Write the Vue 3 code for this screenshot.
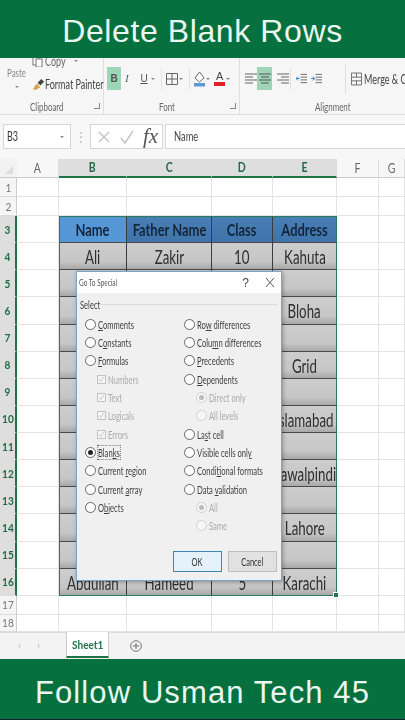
<script setup>
const cols = ['A', 'B', 'C', 'D', 'E', 'F', 'G']
const selCols = ['B', 'C', 'D', 'E']
const rowsData = [
  { n: 1 }, { n: 2 },
  { n: 3, head: true, cells: ['Name', 'Father Name', 'Class', 'Address'] },
  { n: 4, cells: ['Ali', 'Zakir', '10', 'Kahuta'] },
  { n: 5, cells: ['', '', '', ''] },
  { n: 6, cells: ['', '', '', 'Bloha'] },
  { n: 7, cells: ['', '', '', ''] },
  { n: 8, cells: ['', '', '', 'Grid'] },
  { n: 9, cells: ['', '', '', ''] },
  { n: 10, cells: ['', '', '', 'Islamabad'] },
  { n: 11, cells: ['', '', '', ''] },
  { n: 12, cells: ['', '', '', 'Rawalpindi'] },
  { n: 13, cells: ['', '', '', ''] },
  { n: 14, cells: ['', '', '', 'Lahore'] },
  { n: 15, cells: ['', '', '', ''] },
  { n: 16, cells: ['Abdullah', 'Hameed', '5', 'Karachi'] },
  { n: 17 }, { n: 18 }
]
const left = [
  { p: '', u: 'C', s: 'omments', t: 'r' },
  { p: 'C', u: 'o', s: 'nstants', t: 'r' },
  { p: '', u: 'F', s: 'ormulas', t: 'r' },
  { p: '', u: '', s: 'Numbers', t: 'c' },
  { p: '', u: '', s: 'Text', t: 'c' },
  { p: '', u: '', s: 'Logicals', t: 'c' },
  { p: '', u: '', s: 'Errors', t: 'c' },
  { p: 'Blan', u: 'k', s: 's', t: 'r', on: true, focus: true },
  { p: 'Current ', u: 'r', s: 'egion', t: 'r' },
  { p: 'Current ', u: 'a', s: 'rray', t: 'r' },
  { p: 'O', u: 'b', s: 'jects', t: 'r' }
]
const right = [
  { p: 'Ro', u: 'w', s: ' differences', t: 'r' },
  { p: 'Colu', u: 'm', s: 'n differences', t: 'r' },
  { p: '', u: 'P', s: 'recedents', t: 'r' },
  { p: '', u: 'D', s: 'ependents', t: 'r' },
  { p: '', u: '', s: 'Direct only', t: 's', on: true },
  { p: '', u: '', s: 'All levels', t: 's' },
  { p: 'La', u: 's', s: 't cell', t: 'r' },
  { p: 'Visible cells onl', u: 'y', s: '', t: 'r' },
  { p: 'Condi', u: 't', s: 'ional formats', t: 'r' },
  { p: 'Data ', u: 'v', s: 'alidation', t: 'r' },
  { p: '', u: '', s: 'All', t: 's', on: true },
  { p: '', u: '', s: 'Same', t: 's' }
]
</script>

<template>
  <div class="page">
    <header class="banner top">Delete Blank Rows</header>

    <section class="ribbon soft">
      <div class="group clip">
        <div class="grp-body clip-body">
          <div class="paste"><span class="sq">Paste</span><i class="caret"></i></div>
          <div class="clip-list">
            <div class="copy">
              <svg width="11" height="11" viewBox="0 0 11 11"><rect x="1" y="1" width="6" height="8" fill="#fff" stroke="#777"/><rect x="4" y="3" width="6" height="8" fill="#fff" stroke="#777"/></svg>
              <span class="sq">Copy</span><i class="caret c2"></i>
            </div>
            <div class="painter">
              <svg width="13" height="13" viewBox="0 0 14 14"><path d="M1 12 L5 6 L9 10 L4 13 Z" fill="#d8a24e"/><path d="M6 5 L10 1 L13 4 L9 8 Z" fill="#444"/></svg>
              <span class="sq">Format Painter</span>
            </div>
          </div>
        </div>
        <div class="grp-label"><span class="lbl-clip sq">Clipboard</span><i class="launch"></i></div>
      </div>

      <div class="group font">
        <div class="grp-body font-body">
          <span class="tb on b">B</span>
          <span class="tb i">I</span>
          <span class="tb u">U</span><i class="caret c3"></i>
          <i class="vsep"></i>
          <svg class="borders" width="12" height="12" viewBox="0 0 12 12"><path d="M.5.5h11v11H.5zM6 .5v11M.5 6h11" fill="none" stroke="#666"/></svg><i class="caret c3"></i>
          <i class="vsep"></i>
          <svg class="fill" width="11" height="16" viewBox="0 0 11 16"><path d="M5.500 1 L10 7 L5.500 11 L1 7 Z" fill="#fff" stroke="#666"/><rect y="12" width="11" height="3.500" fill="#5b9bd5"/></svg><i class="caret c3"></i>
          <span class="fcolor">A</span><i class="caret c3"></i>
        </div>
        <div class="grp-label"><span class="lbl-font sq">Font</span><i class="launch"></i></div>
      </div>

      <div class="group align">
        <div class="grp-body align-body">
          <svg class="al" width="12" height="11" viewBox="0 0 12 11"><path d="M0 1h12M0 4h8M0 7h12M0 10h8" stroke="#666" fill="none"/></svg>
          <span class="al-on"><svg width="12" height="11" viewBox="0 0 12 11"><path d="M0 1h12M2 4h8M0 7h12M2 10h8" stroke="#555" fill="none"/></svg></span>
          <svg class="al" width="12" height="11" viewBox="0 0 12 11"><path d="M0 1h12M4 4h8M0 7h12M4 10h8" stroke="#666" fill="none"/></svg>
          <i class="vsep v2"></i>
          <svg class="al" width="11" height="11" viewBox="0 0 12 11"><path d="M5 1h7M5 4h7M5 7h7M5 10h7" stroke="#666" fill="none"/><path d="M4 5.500H0M2 3.500L0 5.500l2 2" stroke="#2b7cd3" fill="none"/></svg>
          <svg class="al" width="11" height="11" viewBox="0 0 12 11"><path d="M5 1h7M5 4h7M5 7h7M5 10h7" stroke="#666" fill="none"/><path d="M0 5.500h4M2 3.500l2 2-2 2" stroke="#2b7cd3" fill="none"/></svg>
        </div>
        <div class="grp-label"><span class="sq lbl-align">Alignment</span></div>
      </div>

      <div class="group merge">
        <div class="grp-body merge-body">
          <svg width="11" height="14" viewBox="0 0 12 14"><path d="M.5.5h11v13H.5zM.5 5h11M.5 9h11M6 .5V5M6 9v4.500" fill="none" stroke="#666"/></svg>
          <span class="sq">Merge &amp; Center</span>
        </div>
      </div>
    </section>

    <section class="fbar soft">
      <div class="namebox"><span class="sq">B3</span><i class="caret c4"></i></div>
      <div class="dots">⋮</div>
      <div class="fbtns">
        <svg width="14" height="14" viewBox="0 0 14 14"><path d="M2 2l10 10M12 2L2 12" stroke="#c4c4c4" stroke-width="1.500"/></svg>
        <svg width="14" height="14" viewBox="0 0 14 14"><path d="M1 8l4 5 8-12" stroke="#c4c4c4" stroke-width="1.500" fill="none"/></svg>
        <span class="fx">fx</span>
      </div>
      <div class="finput"><span class="sq">Name</span></div>
    </section>

    <section class="sheet soft">
      <div class="corner"><i></i></div>
      <div v-for="c in cols" :key="c" class="colh" :class="{ sel: selCols.includes(c) }"><span class="sqc">{{ c }}</span></div>
      <template v-for="r in rowsData" :key="r.n">
        <div class="rowh" :class="{ sel: r.n >= 3 && r.n <= 16 }"><span class="sqc">{{ r.n }}</span></div>
        <div class="cell"></div>
        <template v-if="r.cells">
          <div v-for="(t, i) in r.cells" :key="i" class="cell data" :class="{ head: r.head, first: r.head && i === 0 }"><span class="txt">{{ t }}</span></div>
        </template>
        <template v-else>
          <div v-for="i in 4" :key="i" class="cell"></div>
        </template>
        <div class="cell"></div>
        <div class="cell"></div>
      </template>
      <div class="selection"><i class="handle"></i></div>

      <div class="dialog">
        <div class="dtitle">
          <span class="dname"><span class="sq">Go To Special</span></span>
          <span class="dq">?</span>
          <span class="dx">
            <svg width="10" height="11" viewBox="0 0 10 11"><path d="M1 1l8 9M9 1L1 10" stroke="#555" stroke-width="1"/></svg>
          </span>
        </div>
        <div class="dbody">
          <div class="selhead"><span class="sq d">Select</span><i></i></div>
          <div class="optcols">
            <div class="optcol">
              <div v-for="o in left" :key="o.p + o.u + o.s" class="opt" :class="'t-' + o.t">
                <i v-if="o.t === 'c'" class="check">
                  <svg width="9" height="9" viewBox="0 0 9 9"><path d="M1.500 4.500l2 2.500 4-6" stroke="#bcbcbc" fill="none"/></svg>
                </i>
                <i v-else class="radio" :class="{ on: o.on }"></i>
                <span class="sq d" :class="{ focus: o.focus }">{{ o.p }}<u>{{ o.u }}</u>{{ o.s }}</span>
              </div>
            </div>
            <div class="optcol">
              <div v-for="o in right" :key="o.p + o.u + o.s" class="opt" :class="'t-' + o.t">
                <i class="radio" :class="{ on: o.on }"></i>
                <span class="sq d">{{ o.p }}<u>{{ o.u }}</u>{{ o.s }}</span>
              </div>
            </div>
          </div>
          <div class="dbtns">
            <button class="btn ok"><span class="sqc b2">OK</span></button>
            <button class="btn"><span class="sqc b2">Cancel</span></button>
          </div>
        </div>
      </div>
    </section>

    <section class="tabs soft">
      <span class="nav">‹</span><span class="nav">›</span>
      <div class="tab"><span class="sqc">Sheet1</span></div>
      <span class="plus">
        <svg width="12" height="12" viewBox="0 0 12 12"><circle cx="6" cy="6" r="5.300" fill="none" stroke="#777"/><path d="M6 3v6M3 6h6" stroke="#666"/></svg>
      </span>
    </section>

    <footer class="banner bottom">Follow Usman Tech 45</footer>
  </div>
</template>

<style scoped>
.page {
  width: 405px;
  height: 720px;
  overflow: hidden;
  display: flex;
  flex-direction: column;
  background: #fff;
  font-family: Lato, "Liberation Sans", sans-serif;
  color: #444;
}
i { display: block; font-style: normal; }
.soft { filter: blur(.35px); }
.sq { display: inline-block; transform: scaleX(.72); transform-origin: left center; white-space: nowrap; }
.sq.d { transform: scaleX(.69); }
.sqc { display: inline-block; transform: scaleX(.84); transform-origin: center; white-space: nowrap; }
.sqc.b2 { transform: scaleX(.68); }
.txt { display: inline-block; flex: none; transform: scaleX(.72); transform-origin: center; white-space: nowrap; }
.head .txt { transform: scaleX(.76); }

.banner {
  background: #06703f;
  color: #eaf6f0;
  font-family: "Liberation Sans", sans-serif;
  font-size: 32px;
  text-align: center;
  flex: none;
  letter-spacing: .6px;
  white-space: nowrap;
}
.top { height: 58px; line-height: 63px; }
.bottom { height: 61px; line-height: 67px; letter-spacing: 1.100px; font-size: 31px; border-bottom: 1px solid #123; box-sizing: border-box; }

.ribbon {
  height: 57px;
  flex: none;
  display: flex;
  background: #f6f6f6;
  border-bottom: 1px solid #dedede;
  box-sizing: border-box;
  overflow: hidden;
}
.group { display: flex; flex: none; flex-direction: column; border-right: 1px solid #dedede; box-sizing: border-box; }
.grp-body { height: 41px; display: flex; align-items: center; flex: none; }
.grp-label { display: flex; align-items: center; justify-content: space-between; font-size: 11px; color: #666; height: 14px; }
.launch { width: 5px; height: 5px; border-right: 1px solid #888; border-bottom: 1px solid #888; }

.clip { width: 104px; }
.clip-body { align-items: stretch; }
.paste { width: 32px; padding: 8px 0 0 7px; box-sizing: border-box; font-size: 11px; color: #888; }
.caret { width: 0; height: 0; border: 2px solid transparent; border-top: 2.500px solid #888; border-bottom: 0; margin: 7px 0 0 8px; }
.clip-list { display: flex; flex-direction: column; }
.copy { display: flex; align-items: center; gap: 2px; height: 10px; margin-top: -2px; font-size: 12.500px; color: #666; }
.c2 { margin: 0 0 0 -2px; }
.painter { display: flex; align-items: center; gap: 0; font-size: 12.500px; margin-top: 11px; color: #444; white-space: nowrap; }
.lbl-clip { margin-left: 30px; }
.grp-label .launch { margin-right: 3px; }

.font { width: 136px; }
.font-body { padding-left: 3px; }
.tb { display: flex; width: 14px; height: 23px; align-items: center; justify-content: center; font-family: "Liberation Sans", sans-serif; font-size: 10px; color: #555; flex: none; }
.tb.on { background: #9fd5b7; }
.b { font-weight: 700; }
.i { font-style: italic; font-family: "Liberation Serif", serif; width: 12px; }
.u { text-decoration: underline; width: 12px; margin-left: 5px; }
.c3 { margin: 0 0 0 1px; flex: none; }
.vsep { width: 1px; height: 22px; background: #e2e2e2; margin: 0 4px 0 6px; flex: none; }
.fcolor { font-family: "Liberation Sans", sans-serif; font-size: 11px; color: #444; margin-left: 4px; border-bottom: 4px solid #d22; line-height: 11px; padding: 0 2px; }
.lbl-font { margin-left: 55px; }

.align { width: 105px; border-right: 0; }
.align-body { padding-left: 5px; gap: 0; }
.al { flex: none; }
.al-on { display: flex; width: 15px; height: 23px; align-items: center; justify-content: center; background: #9fd5b7; flex: none; margin: 0 5px 0 0; }
.v2 { margin: 0 5px 0 1px; }
.align-body .al:last-child { margin-left: 4px; }
.lbl-align { margin-left: 75px; }

.merge { flex: 1; min-width: 0; border: 0; white-space: nowrap; }
.merge-body { gap: 2px; font-size: 12.500px; height: 30px; margin-top: 6px; padding-left: 5px; border-left: 1px solid #dedede; }
.merge-body svg { flex: none; }

.fbar {
  flex: none;
  height: 44px;
  padding: 9px 0 10px 3px;
  box-sizing: border-box;
  background: #f7f7f7;
  display: flex;
  font-size: 12.500px;
}
.namebox { width: 68px; box-sizing: border-box; border: 1px solid #d6d6d6; background: #fff; display: flex; align-items: center; justify-content: space-between; padding: 0 6px 0 3px; color: #333; }
.c4 { margin: 0; }
.dots { width: 19px; text-align: center; color: #bbb; line-height: 25px; font-size: 12px; }
.fbtns { width: 73px; box-sizing: border-box; border: 1px solid #d6d6d6; background: #fff; display: flex; align-items: center; gap: 9px; padding-left: 6px; }
.fx { font-family: "Liberation Serif", serif; font-style: italic; font-size: 21px; color: #555; }
.finput { flex: 1; margin-left: 2px; border: 1px solid #d6d6d6; border-right: 0; background: #fff; padding-left: 8px; line-height: 23px; font-size: 13px; color: #444; }

.sheet {
  flex: 1;
  position: relative;
  display: grid;
  grid-template-columns: 17px 42px 68px 85px 61px 64px 42px 26px;
  grid-template-rows: 19px 19px 19px repeat(14, 27.140px) 19px 17px;
  background: #fff;
  overflow: hidden;
}
.corner { background: #f2f2f2; border-bottom: 1px solid #ccc; box-sizing: border-box; }
.corner i { width: 0; height: 0; border: 4px solid transparent; border-right-color: #ddd; border-bottom-color: #ddd; margin: 7px 0 0 5px; }
.colh { display: flex; align-items: center; justify-content: center; background: #f7f7f7; border-right: 1px solid #dcdcdc; border-bottom: 1px solid #ccc; box-sizing: border-box; font-size: 12.500px; color: #666; }
.colh.sel { background: #dedede; color: #1e6b45; font-weight: 700; border-bottom: 2px solid #217346; }
.rowh { display: flex; align-items: center; justify-content: center; background: #f5f5f5; border-right: 1px solid #ccc; border-bottom: 1px solid #dcdcdc; box-sizing: border-box; font-size: 12px; color: #777; }
.rowh.sel { background: #dedede; color: #1e6b45; font-weight: 700; border-right: 2px solid #217346; }
.cell { border-right: 1px solid #e3e3e3; border-bottom: 1px solid #e3e3e3; box-sizing: border-box; min-width: 0; }
.cell.data {
  display: flex;
  align-items: center;
  justify-content: center;
  padding-top: 2px;
  background: linear-gradient(#cdcdcd 0%, #c6c6c6 70%, #a8a8a8 100%);
  border-right: 1px solid #3c3c3c;
  border-bottom: 1px solid #4a4a4a;
  font-size: 18.500px;
  color: #2e2e2e;
  white-space: nowrap;
  overflow: hidden;
}
.cell.head { background: linear-gradient(#4a7fb5, #3f74ab); font-weight: 700; color: #14253a; font-size: 17px; padding-top: 1px; }
.cell.first { background: #5596d6; }
.selection {
  position: absolute;
  left: 59px;
  top: 57px;
  width: 278px;
  height: 380px;
  box-sizing: border-box;
  border: 1.500px solid #2a7a5e;
  z-index: 1;
  pointer-events: none;
}
.handle { position: absolute; right: -3px; bottom: -3px; width: 4px; height: 4px; background: #217346; border: 1px solid #fff; }

.dialog {
  position: absolute;
  left: 76px;
  top: 112px;
  width: 206px;
  height: 310px;
  z-index: 2;
  box-sizing: border-box;
  background: #f0f0f0;
  border: 1px solid #7ba4c6;
  box-shadow: 1px 1px 4px rgba(0, 0, 0, .3);
  display: flex;
  flex-direction: column;
  font-size: 11px;
  color: #3f3f3f;
}
.dtitle { height: 21px; flex: none; background: #fff; display: flex; align-items: center; padding-left: 2px; }
.dname { font-size: 9px; color: #555; flex: 1; margin-top: -1px; }
.dq { font-family: "Liberation Sans", sans-serif; font-size: 12px; color: #444; margin-right: 16px; }
.dx { display: flex; margin-right: 6px; }
.dbody { flex: 1; display: flex; flex-direction: column; padding: 5px 3px 8px 3px; }
.selhead { display: flex; align-items: center; gap: 0; height: 13px; flex: none; }
.selhead i { flex: 1; height: 1px; background: #dcdcdc; margin-left: -10px; }
.optcols { display: flex; margin-top: 4px; padding-left: 5px; }
.optcol { width: 99px; flex: none; }
.opt { height: 18.350px; display: flex; align-items: center; gap: 2px; white-space: nowrap; }
.opt u { text-underline-offset: 1px; }
.radio { width: 9px; height: 9px; flex: none; border-radius: 50%; border: 1px solid #666; background: #fff; position: relative; }
.radio.on::after { content: ""; position: absolute; inset: 2px; border-radius: 50%; background: #222; }
.t-c { padding-left: 12px; color: #aaa; gap: 2px; }
.check { width: 7px; height: 7px; border: 1px solid #c4c4c4; background: #f4f4f4; display: flex; align-items: center; justify-content: center; }
.t-s { padding-left: 12px; color: #aaa; gap: 2px; }
.t-s .radio { border-color: #d0d0d0; background: #f6f6f6; }
.t-s .radio.on::after { background: #bbb; }
.focus { outline: 1px dotted #666; outline-offset: 0; }
.dbtns { margin-top: auto; display: flex; justify-content: flex-end; gap: 6px; padding-right: 1px; }
.btn { width: 49px; height: 21px; box-sizing: border-box; padding: 0; font: inherit; color: #333; background: #e1e1e1; border: 1px solid #bdbdbd; }
.btn.ok { background: #e5f1fb; border: 1.500px solid #3e85b8; }

.tabs {
  flex: none;
  height: 27px;
  display: flex;
  align-items: stretch;
  background: #f3f3f3;
  border-top: 1px solid #dcdcdc;
  box-sizing: border-box;
  padding-left: 18px;
}
.nav { color: #bbb; font-size: 11px; width: 19px; line-height: 24px; }
.tab { width: 43px; margin: -1px 0 0 10px; background: #fff; border-left: 1px solid #ccc; border-right: 1px solid #ccc; border-bottom: 2px solid #217346; box-sizing: border-box; text-align: center; font-weight: 700; color: #217346; font-size: 12px; line-height: 26px; height: 26px; }
.plus { display: flex; align-items: center; margin-left: 21px; }
</style>

<style>
html, body { margin: 0; background: #fff; }
</style>
